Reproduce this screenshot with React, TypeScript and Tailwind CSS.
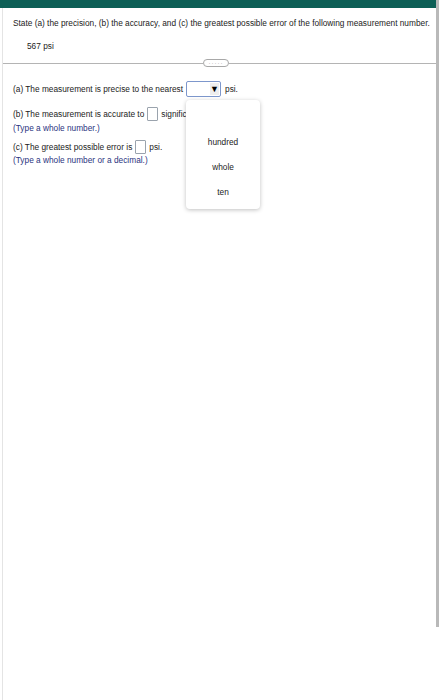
import React from "react"

const font = { fontFamily: '"Liberation Sans", Arial, sans-serif' }

function AnswerBox() {
  return (
    <span className="mx-[3px] inline-block h-[14px] w-[11px] rounded-[1px] border border-[#9aa3ad] bg-white align-middle" />
  )
}

export default function App() {
  return (
    <div className="flex h-[700px] w-[443px] bg-white text-[#222]" style={font}>
      <div className="flex w-[436px] flex-col">
        <div className="h-[8px] w-full bg-[#0d5f56]" />
        <div className="relative ml-[2px] flex-1 border-l border-[#e4e4e4]">
          {/* question */}
          <p className="pl-[10px] pt-[10px] text-[8.3px] leading-[10px]">
            State (a) the precision, (b) the accuracy, and (c) the greatest possible error of the following measurement number.
          </p>
          <p className="pl-[24px] pt-[13px] text-[8.3px] leading-[10px]">567 psi</p>

          {/* divider */}
          <div className="mt-[8px] flex items-center">
            <div className="h-px w-[200px] bg-[#b4b4b4]" />
            <div className="flex h-[8px] w-[26px] items-center justify-center rounded-full border border-[#a8a8a8] bg-white text-[6px] leading-none tracking-[1px] text-[#888]">
              ·····
            </div>
            <div className="h-px flex-1 bg-[#b4b4b4]" />
          </div>

          {/* answers */}
          <div className="pl-[10px] pt-[14px] text-[8.3px] leading-[10px]">
            <div className="flex items-center">
              <span>(a) The measurement is precise to the nearest</span>
              <span className="ml-[3px] flex h-[16px] w-[35px] items-center justify-end rounded-[2px] border-[1.5px] border-[#7d97cc] bg-white pr-[1px]">
                <span className="flex h-[12px] w-[9px] items-center justify-center bg-[#eeeeee] text-[9px] leading-none text-black">
                  ▼
                </span>
              </span>
              <span className="ml-[4px]">psi.</span>
            </div>

            <div className="mt-[10px] flex items-center">
              <span>(b) The measurement is accurate to</span>
              <AnswerBox />
              <span>significant digits.</span>
            </div>
            <p className="mt-[2px] text-[#2b3480]">(Type a whole number.)</p>

            <div className="mt-[7px] flex items-center">
              <span>(c) The greatest possible error is</span>
              <AnswerBox />
              <span>psi.</span>
            </div>
            <p className="mt-[1px] text-[#2b3480]">(Type a whole number or a decimal.)</p>
          </div>

          {/* open dropdown */}
          <div className="absolute left-[183px] top-[92px] w-[74px] rounded-[4px] bg-white pb-[4px] pt-[30px] text-[8.3px] shadow-[0_1px_4px_rgba(0,0,0,0.25)]">
            {["hundred", "whole", "ten"].map((o) => (
              <div key={o} className="flex h-[25px] items-center justify-center">
                {o}
              </div>
            ))}
          </div>
        </div>
      </div>
      <div className="h-[627px] w-[3px] bg-[#b9b9b9]" />
    </div>
  )
}
